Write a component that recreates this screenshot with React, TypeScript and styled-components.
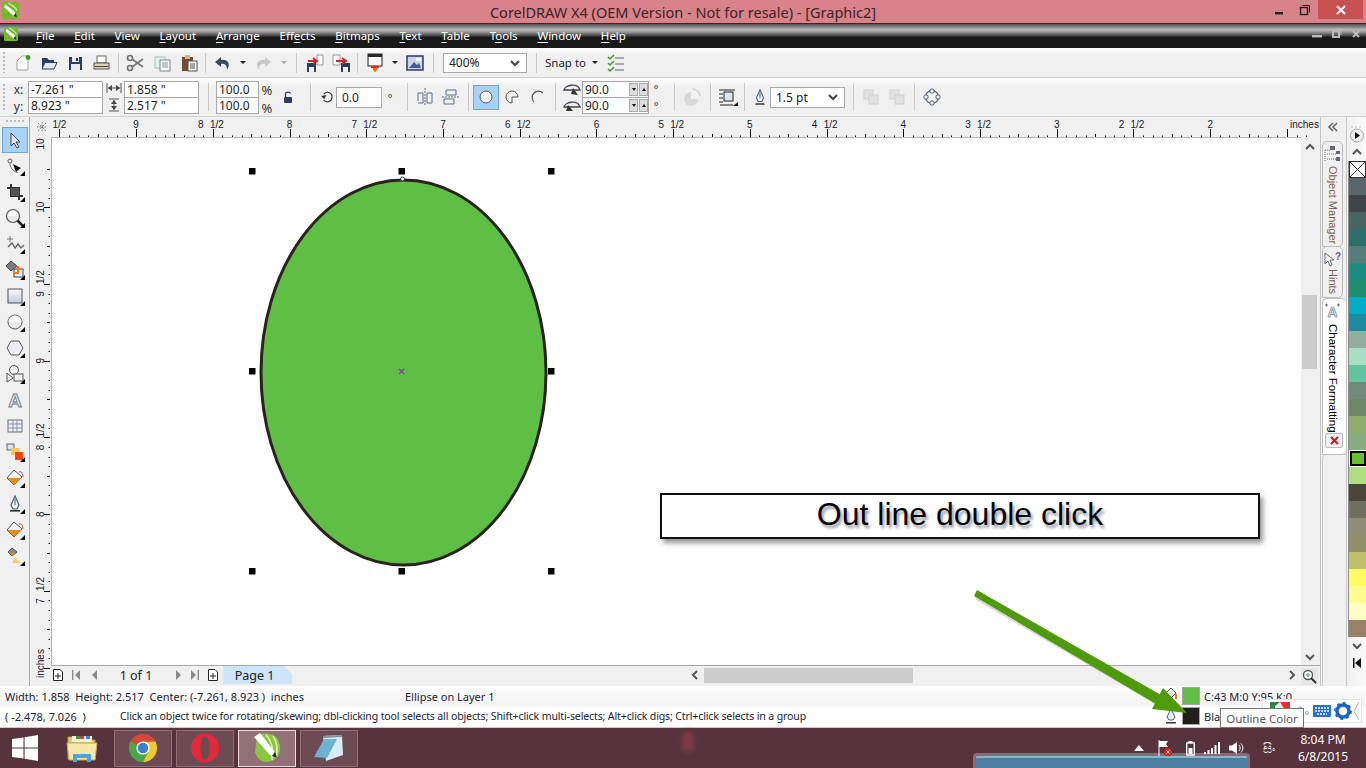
import React from 'react';
import styled, { createGlobalStyle } from 'styled-components';

const GlobalStyle = createGlobalStyle`
  html, body { margin: 0; padding: 0; background: #f0f0f0; }
  body { font-family: "Noto Sans", "Liberation Sans", sans-serif; }
`;

const Shell = styled.div`
  position: relative;
  width: 1366px;
  height: 768px;
  overflow: hidden;
  display: flex;
  flex-direction: column;
  background: #f0f0f0;
`;

/* ---------- title + menu ---------- */

const TitleBar = styled.div`
  height: 24px;
  flex: none;
  box-sizing: border-box;
  display: flex;
  align-items: center;
  justify-content: center;
  position: relative;
  background: #d8828a;
  border-bottom: 1px solid #3d2226;
  color: #3f2226;
  font-size: 14.5px;
`;

const TitleLogo = styled.div`
  position: absolute;
  left: 2px;
  top: 2px;
  line-height: 0;
`;

const WindowButtons = styled.div`
  position: absolute;
  right: 3px;
  top: 0;
  display: flex;
  align-items: flex-start;
`;

const WindowButton = styled.div<{ $w: number; $danger?: boolean }>`
  width: ${({ $w }) => $w}px;
  height: 19px;
  display: flex;
  align-items: center;
  justify-content: center;
  background: ${({ $danger }) => ($danger ? '#c75050' : 'transparent')};
`;

const MenuBar = styled.div`
  height: 24px;
  flex: none;
  display: flex;
  align-items: flex-end;
  position: relative;
  padding-left: 36px;
  gap: 19.8px;
  background: linear-gradient(#505050 0, #b8b8b8 24%, #8a8a8a 36%, #1a1a1a 56%, #1a1a1a 100%);
`;

const MenuLogo = styled.div`
  position: absolute;
  left: 4px;
  top: 3px;
  line-height: 0;
`;

const MenuItem = styled.span`
  color: #fff;
  font-size: 11.5px;
  line-height: 19px;
  height: 22px;
  u { text-underline-offset: 2px; }
`;

const MdiButtons = styled.div`
  position: absolute;
  right: 3px;
  top: 4px;
  display: flex;
  gap: 5px;
`;

/* ---------- toolbars ---------- */

const ToolRow = styled.div<{ $h: number }>`
  height: ${({ $h }) => $h}px;
  flex: none;
  box-sizing: border-box;
  display: flex;
  align-items: center;
  background: linear-gradient(#fff 0, #f0f0f0 22%);
  border-bottom: 1px solid #cfcfcf;
  position: relative;
`;

const Grip = styled.div`
  width: 2px;
  height: 70%;
  margin: 0 4px 0 3px;
  flex: none;
  background-image: linear-gradient(#b9b9b9 50%, transparent 50%);
  background-size: 2px 4px;
`;

const ToolSlot = styled.div<{ $w: number; $active?: boolean }>`
  width: ${({ $w }) => $w}px;
  height: 25px;
  flex: none;
  display: flex;
  align-items: center;
  justify-content: center;
  box-sizing: border-box;
  background: ${({ $active }) => ($active ? '#a9d2f6' : 'transparent')};
  border: 1px solid ${({ $active }) => ($active ? '#6aa7dc' : 'transparent')};
`;

const Caret = styled.div<{ $w?: number; $muted?: boolean }>`
  width: ${({ $w }) => $w ?? 14}px;
  flex: none;
  display: flex;
  justify-content: center;
  &::after {
    content: '';
    border-left: 3.5px solid transparent;
    border-right: 3.5px solid transparent;
    border-top: 3.5px solid ${({ $muted }) => ($muted ? '#aaa' : '#222')};
  }
`;

const Separator = styled.div<{ $l: number; $r: number; $h?: number }>`
  width: 1px;
  height: ${({ $h }) => $h ?? 20}px;
  flex: none;
  margin: 0 ${({ $r }) => $r}px 0 ${({ $l }) => $l}px;
  background: #c9c9c9;
`;

const ComboBox = styled.div<{ $w: number; $h: number }>`
  width: ${({ $w }) => $w}px;
  height: ${({ $h }) => $h}px;
  flex: none;
  box-sizing: border-box;
  border: 1px solid #a8a8a8;
  background: #fff;
  display: flex;
  align-items: center;
  justify-content: space-between;
  padding: 0 5px;
  font-size: 12px;
  color: #222;
`;

const SnapLabel = styled.span`
  width: 41px;
  flex: none;
  font-size: 11.5px;
  color: #222;
  white-space: nowrap;
`;

const FieldStack = styled.div<{ $w: number }>`
  width: ${({ $w }) => $w}px;
  flex: none;
  display: flex;
  flex-direction: column;
  margin-top: 1px;
`;

const Field = styled.div`
  height: 17px;
  box-sizing: border-box;
  border: 1px solid #a8a8a8;
  background: #fff;
  font-size: 12px;
  line-height: 15px;
  padding-left: 2px;
  color: #222;
  white-space: pre;
  display: flex;
  align-items: center;
  justify-content: space-between;
  & + & { margin-top: -1px; }
`;

const SideLabels = styled.div<{ $w: number; $size?: number }>`
  width: ${({ $w }) => $w}px;
  flex: none;
  height: 33px;
  display: flex;
  flex-direction: column;
  justify-content: space-around;
  align-items: center;
  font-size: ${({ $size }) => $size ?? 12}px;
  color: #333;
`;

const Spinner = styled.div`
  display: flex;
  gap: 1px;
  height: 13px;
`;

const SpinCell = styled.div<{ $up?: boolean }>`
  width: 9px;
  background: #dcdcdc;
  border: 1px solid #a9a9a9;
  box-sizing: border-box;
  display: flex;
  align-items: center;
  justify-content: center;
  &::after {
    content: '';
    border-left: 2.5px solid transparent;
    border-right: 2.5px solid transparent;
    ${({ $up }) => ($up ? 'border-bottom: 3px solid #111;' : 'border-top: 3px solid #111;')}
  }
`;

/* ---------- workspace ---------- */

const Workspace = styled.div`
  flex: 1;
  min-height: 0;
  display: flex;
  background: #f0f0f0;
`;

const Toolbox = styled.div`
  width: 29px;
  flex: none;
  border-right: 1px solid #ababab;
  display: flex;
  flex-direction: column;
  align-items: center;
  padding-top: 3px;
  box-sizing: content-box;
`;

const ToolboxGrip = styled.div`
  width: 18px;
  height: 2px;
  flex: none;
  margin-bottom: 5px;
  background-image: linear-gradient(90deg, #b9b9b9 50%, transparent 50%);
  background-size: 4px 2px;
`;

const ToolboxTool = styled.div<{ $active?: boolean }>`
  width: 26px;
  height: 26px;
  flex: none;
  box-sizing: border-box;
  position: relative;
  display: flex;
  align-items: center;
  justify-content: center;
  background: ${({ $active }) => ($active ? '#a9d2f6' : 'transparent')};
  border: 1px solid ${({ $active }) => ($active ? '#6aa7dc' : 'transparent')};
`;

const Flyout = styled.div`
  position: absolute;
  right: 2px;
  bottom: 2px;
  border-left: 5px solid transparent;
  border-bottom: 5px solid #000;
`;

const CenterColumn = styled.div`
  width: 1290px;
  flex: none;
  display: flex;
  flex-direction: column;
  border-right: 1px solid #c4c4c4;
  box-sizing: content-box;
`;

const RulerTop = styled.div`
  height: 20px;
  flex: none;
  line-height: 0;
`;

const BodyRow = styled.div`
  flex: 1;
  min-height: 0;
  display: flex;
`;

const RulerLeft = styled.div`
  width: 21px;
  flex: none;
  line-height: 0;
  height: 545px;
`;

const ViewColumn = styled.div`
  flex: 1;
  min-width: 0;
  display: flex;
  flex-direction: column;
`;

const CanvasRow = styled.div`
  height: 528px;
  flex: none;
  display: flex;
`;

const Canvas = styled.div`
  width: 1250px;
  flex: none;
  position: relative;
  background: #fff;
  border-top: 1px solid #b5b5b5;
  border-left: 1px solid #b5b5b5;
  box-sizing: border-box;
  overflow: hidden;
`;

const Drawing = styled.svg`
  position: absolute;
  left: 0;
  top: 0;
`;

const Callout = styled.div`
  position: absolute;
  left: 608px;
  top: 355px;
  width: 600px;
  height: 46px;
  box-sizing: border-box;
  border: 2px solid #111;
  padding-bottom: 3px;
  background: #fff;
  box-shadow: 3px 4px 5px rgba(60, 60, 60, 0.55);
  display: flex;
  align-items: center;
  justify-content: center;
  font-family: "Liberation Sans", Arial, sans-serif;
  font-size: 32px;
  color: #050505;
  text-shadow: 2px 3px 3px rgba(60, 70, 90, 0.55);
`;

const VScroll = styled.div`
  flex: 1;
  display: flex;
  flex-direction: column;
  align-items: center;
  justify-content: space-between;
  padding: 4px 2px 2px 0;
  position: relative;
  box-sizing: border-box;
`;

const VThumb = styled.div`
  position: absolute;
  left: 1px;
  top: 158px;
  width: 15px;
  height: 74px;
  background: #cdcdcd;
`;

const PageBar = styled.div`
  height: 19px;
  flex: none;
  display: flex;
  align-items: center;
  border-top: 1px solid #a9a9a9;
  box-sizing: border-box;
  font-size: 12px;
  color: #222;
`;

const PageCount = styled.span`
  width: 70px;
  flex: none;
  text-align: center;
  font-size: 12.5px;
`;

const PageTab = styled.div`
  width: 69px;
  height: 18px;
  flex: none;
  background: #cde4f9;
  display: flex;
  align-items: center;
  justify-content: center;
  padding-right: 6px;
  box-sizing: border-box;
  clip-path: polygon(0 0, 88% 0, 100% 45%, 100% 100%, 0 100%);
  font-size: 12.5px;
`;

const PageGap = styled.div`
  width: 410px;
  flex: none;
  display: flex;
  align-items: center;
  justify-content: flex-end;
  padding-right: 1px;
  box-sizing: border-box;
`;

const HTrack = styled.div`
  flex: 1;
  height: 15px;
  position: relative;
  display: flex;
  align-items: center;
  justify-content: flex-end;
  padding-right: 22px;
`;

const HThumb = styled.div`
  position: absolute;
  left: 2px;
  top: 0;
  width: 209px;
  height: 15px;
  background: #cdcdcd;
`;

const ZoomCorner = styled.div`
  position: absolute;
  right: 2px;
  top: 0;
  width: 17px;
  height: 17px;
  background: #e6e6e6;
  line-height: 0;
`;

const Docker = styled.div`
  width: 26px;
  flex: none;
  display: flex;
  flex-direction: column;
  align-items: flex-start;
  border-right: 1px solid #c9c9c9;
  padding-left: 1px;
  box-sizing: border-box;
`;

const DockerChevron = styled.div`
  width: 21px;
  height: 25px;
  flex: none;
  box-sizing: border-box;
  padding-bottom: 6px;
  display: flex;
  align-items: center;
  justify-content: center;
  line-height: 0;
`;

const DockerTab = styled.div<{ $h: number; $active?: boolean }>`
  width: ${({ $active }) => ($active ? 24 : 21)}px;
  height: ${({ $h }) => $h}px;
  flex: none;
  box-sizing: border-box;
  border: 1px solid #bdbdbd;
  border-right: ${({ $active }) => ($active ? 'none' : '1px solid #bdbdbd')};
  border-top-right-radius: 5px;
  border-top-left-radius: 5px;
  border-bottom-right-radius: 5px;
  background: ${({ $active }) => ($active ? '#fff' : '#f0f0f0')};
  display: flex;
  flex-direction: column;
  align-items: flex-start;
  padding: 3px 0 0 1px;
  position: relative;
  margin-top: ${({ $active }) => ($active ? '0' : '-1px')};
  svg { flex: none; }
`;

const DockerLabel = styled.span<{ $active?: boolean; $top: number }>`
  writing-mode: vertical-rl;
  width: 17px;
  flex: none;
  margin-top: ${({ $top }) => $top}px;
  font-family: "Liberation Sans", Arial, sans-serif;
  font-size: ${({ $active }) => ($active ? '11.5px' : '11px')};
  line-height: 17px;
  white-space: nowrap;
  color: ${({ $active }) => ($active ? '#000' : '#85604f')};
`;

const DockerClose = styled.div`
  position: absolute;
  left: 2px;
  bottom: 6px;
  width: 18px;
  height: 15px;
  box-sizing: border-box;
  border: 1px solid #bbb;
  border-radius: 2px;
  background: #efefef;
  display: flex;
  align-items: center;
  justify-content: center;
`;

const DockerRest = styled.div`
  flex: 1;
  width: 24px;
  margin-top: -1px;
  box-sizing: border-box;
  border: 1px solid #c9c9c9;
  border-bottom: none;
  border-right: none;
  border-top-left-radius: 5px;
`;

const PaletteColumn = styled.div`
  flex: 1;
  display: flex;
  flex-direction: column;
  align-items: center;
  background: linear-gradient(90deg, #f0f0f0, #fcfcfc);
`;

const PaletteGrip = styled.div`
  height: 10px;
  flex: none;
  padding-top: 5px;
  box-sizing: border-box;
  line-height: 0;
`;

const PaletteArrow = styled.div<{ $h: number }>`
  height: ${({ $h }) => $h}px;
  flex: none;
  display: flex;
  align-items: center;
  line-height: 0;
`;

const Swatches = styled.div`
  width: 18px;
  flex: none;
  border-left: 1px solid #8f8f8f;
  display: flex;
  flex-direction: column;
  margin-left: 1px;
`;

const Swatch = styled.div<{ $color: string; $selected?: boolean }>`
  height: 17px;
  box-sizing: border-box;
  background: ${({ $color }) => $color};
  border: ${({ $selected }) => ($selected ? '1px solid #fff' : 'none')};
  box-shadow: ${({ $selected }) => ($selected ? 'inset 0 0 0 2px #000' : 'none')};
  line-height: 0;
`;

/* ---------- status + taskbar ---------- */

const StatusBar = styled.div`
  height: 42px;
  flex: none;
  background: linear-gradient(#fff 0, #f3f3f3 45%, #fff 55%);
  border-bottom: 1px solid #c9c9c9;
  font-size: 11px;
  color: #1c2233;
  position: relative;
  box-sizing: border-box;
`;

const StatusRow = styled.div`
  height: 20px;
  display: flex;
  align-items: center;
  white-space: pre;
`;

const StatusCell = styled.span<{ $w: number; $l?: number; $hint?: boolean }>`
  width: ${({ $w }) => $w}px;
  margin-left: ${({ $l }) => $l ?? 0}px;
  flex: none;
  font-size: ${({ $hint }) => ($hint ? '10.6px' : '11px')};
  letter-spacing: ${({ $hint }) => ($hint ? '-0.15px' : '0')};
`;

const ColorPreview = styled.div<{ $color: string }>`
  width: 18px;
  height: 18px;
  flex: none;
  box-sizing: border-box;
  background: ${({ $color }) => $color};
  border: 1px solid #a5a5a5;
  margin: 0 4px 0 3px;
`;

const Taskbar = styled.div`
  height: 40px;
  flex: none;
  display: flex;
  align-items: center;
  background: #57343d;
  position: relative;
  color: #fff;
`;

const StartButton = styled.div`
  width: 50px;
  flex: none;
  display: flex;
  justify-content: center;
  line-height: 0;
`;

const PinnedIcon = styled.div`
  width: 64px;
  flex: none;
  display: flex;
  justify-content: center;
  line-height: 0;
`;

const TaskButton = styled.div<{ $active?: boolean }>`
  width: 58px;
  height: 37px;
  flex: none;
  box-sizing: border-box;
  margin-right: 4px;
  display: flex;
  align-items: center;
  justify-content: center;
  line-height: 0;
  background: ${({ $active }) => ($active ? '#917078' : '#6d4b54')};
  border: 1px solid ${({ $active }) => ($active ? '#e9dfe1' : '#8d7076')};
`;

const GhostMark = styled.div`
  position: absolute;
  left: 682px;
  top: 2px;
  width: 12px;
  height: 22px;
  border-radius: 50% 50% 40% 40%;
  background: #7e3a46;
  filter: blur(2px);
`;

const PeekThumb = styled.div`
  position: absolute;
  left: 973px;
  top: 25px;
  width: 277px;
  height: 20px;
  box-sizing: border-box;
  border: 3px solid #8b6a74;
  border-radius: 4px 4px 0 0;
  background: #4b7ea0;
  box-shadow: inset 0 2px 0 #8fb3cc;
`;

const Tray = styled.div`
  position: absolute;
  left: 1130px;
  top: 0;
  height: 40px;
  width: 236px;
  display: flex;
  align-items: center;
`;

const TrayIcon = styled.div<{ $w: number }>`
  width: ${({ $w }) => $w}px;
  flex: none;
  display: flex;
  justify-content: center;
  line-height: 0;
`;

const TrayLang = styled.div`
  width: 46px;
  flex: none;
  text-align: center;
  font-size: 13px;
`;

const Clock = styled.div`
  width: 70px;
  text-align: center;
  font-size: 12px;
  line-height: 17px;
  margin-left: -4px;
`;

/* ---------- overlays ---------- */

const ArrowOverlay = styled.svg`
  position: absolute;
  left: 0;
  top: 0;
  pointer-events: none;
`;

const ImeBar = styled.div`
  position: absolute;
  left: 1262px;
  top: 699px;
  width: 100px;
  height: 24px;
  padding-left: 3px;
  display: flex;
  align-items: center;
  background: #fff;
  border: 1px solid #e3e3e3;
  box-sizing: border-box;
  line-height: 0;
`;

const Tooltip = styled.div`
  position: absolute;
  left: 1220px;
  top: 708px;
  width: 84px;
  height: 20px;
  box-sizing: border-box;
  border: 1px solid #767676;
  background: #fff;
  font-size: 11.5px;
  color: #575757;
  display: flex;
  align-items: center;
  justify-content: center;
  white-space: nowrap;
`;

/* ---------- drawings ---------- */

const S: React.FC<{ size?: number; w?: number; h?: number; children: React.ReactNode }> = ({ size = 20, w, h, children }) => (
  <svg width={w ?? size} height={h ?? size} viewBox={`0 0 ${w ?? size} ${h ?? size}`}>{children}</svg>
);

const CorelLogo = ({ size = 16 }: { size?: number }) => (
  <svg width={size} height={size} viewBox="0 0 16 16">
    <rect width="16" height="16" rx="1.5" fill="#76b82a" />
    <path d="M3 2 L13 10 L11 13 L2 5 Z" fill="#fff" />
    <path d="M11 13 L14 14.5 L13 10 Z" fill="#333" />
    <path d="M6 1 C9 3 13 5 14 8" stroke="#cfe89f" strokeWidth="1.4" fill="none" />
  </svg>
);

const Navy = '#2f3b63';

const icons: Record<string, React.ReactNode> = {
  new: (<S><path d="M4 8 L9 3 H15 V17 H4 Z" fill="#fafafa" stroke="#a5a5a5" /><circle cx="15" cy="4.5" r="2.4" fill="#3f9a1e" /></S>),
  open: (<S><path d="M3 5 H8 L10 7 H15 V9 H6 L3 16 Z" fill={Navy} /><path d="M6 9.5 H18 L15 16 H3 Z" fill="#e5e7ef" stroke={Navy} /></S>),
  save: (<S><rect x="4" y="4" width="13" height="13" fill={Navy} /><rect x="7" y="4" width="7" height="5" fill="#e9e9ef" /><rect x="6" y="11" width="9" height="6" fill="#e9e9ef" /><rect x="11" y="5" width="2" height="3" fill={Navy} /></S>),
  print: (<S><rect x="6" y="3" width="9" height="7" fill="#fff" stroke="#666" /><rect x="3" y="10" width="15" height="6" fill="#d7d2b8" stroke="#555" /><line x1="4" y1="13.5" x2="17" y2="13.5" stroke="#444" /></S>),
  cut: (<S><circle cx="5" cy="5" r="2.5" fill="none" stroke="#6f6f6f" strokeWidth="1.6" /><circle cx="5" cy="15" r="2.5" fill="none" stroke="#6f6f6f" strokeWidth="1.6" /><path d="M7 6 L18 14 M7 14 L18 6" stroke="#7a7a7a" strokeWidth="1.8" /></S>),
  copy: (<S><rect x="3" y="4" width="10" height="11" fill="#e6f0ee" stroke="#a9c0bc" /><rect x="8" y="7" width="10" height="11" fill="#f7f7f7" stroke="#7c8a8c" /><path d="M10 10 H16 M10 12 H16 M10 14 H16" stroke="#8c9a9c" /></S>),
  paste: (<S><rect x="3" y="4" width="11" height="14" fill="#6f4d2e" /><rect x="6" y="2" width="5" height="4" fill="#cdb793" /><rect x="9" y="8" width="9" height="10" fill="#f7f7f7" stroke="#555" /><path d="M11 11 H16 M11 13 H16 M11 15 H16" stroke="#555" /></S>),
  undo: (<S><path d="M8 4 L2 9 L8 14 V11 C12 10 14 12 14 17 C18 11 15 6 8 7 Z" fill="#3e4a60" /></S>),
  redo: (<S><path d="M12 4 L18 9 L12 14 V11 C8 10 6 12 6 17 C2 11 5 6 12 7 Z" fill="#c9c9c9" /></S>),
  import: (<S><rect x="2" y="10" width="9" height="9" fill={Navy} /><rect x="4" y="14" width="5" height="5" fill="#eee" /><path d="M12 2 H18 V12 H12 Z" fill="#f7f7f7" stroke="#999" /><path d="M3 8 H11 M8 5 L12 8 L8 11" stroke="#d3202a" strokeWidth="2" fill="none" /></S>),
  export: (<S><rect x="10" y="10" width="9" height="9" fill={Navy} /><rect x="12" y="14" width="5" height="5" fill="#eee" /><path d="M2 2 H9 V12 H2 Z" fill="#f7f7f7" stroke="#999" /><path d="M5 8 H14 M11 5 L15 8 L11 11" stroke="#d3202a" strokeWidth="2" fill="none" /></S>),
  publish: (<S><rect x="3" y="1" width="14" height="12" fill="#f7f7f7" stroke="#222" /><rect x="3" y="1" width="14" height="3" fill="#2a2a2a" /><path d="M10 12 C14 14 12 18 10 19 C8 18 6 14 10 12" fill="#f26a1b" /><path d="M6 14 H14" stroke="#d92a1e" strokeWidth="2" /></S>),
  launcher: (<S><rect x="2" y="3" width="16" height="14" fill="#cfd3e6" stroke="#2f3b63" strokeWidth="1.5" /><path d="M4 15 L9 9 L12 12 L14 10 L16 15 Z" fill="#4a5a96" /><rect x="11" y="5" width="5" height="3" fill="#f7f7f7" /></S>),
  options: (<S><path d="M2 4 L4 6 L8 2 M2 10 L4 12 L8 8 M2 16 L4 18 L8 14" stroke="#3e9a22" strokeWidth="1.5" fill="none" /><path d="M9 5 H18 M9 11 H18 M9 17 H18" stroke="#5c6472" /></S>),
  lock: (<S><rect x="6" y="10" width="8" height="6" rx="1" fill={Navy} /><path d="M7.5 10 V7 C7.5 4.5 12 4.5 12.5 6.5" stroke={Navy} strokeWidth="1.3" fill="none" /></S>),
  rotate: (<S><path d="M5 6 C10 1 17 5 16 11 C15 17 8 18 5 14" stroke="#333" strokeWidth="1.5" fill="none" /><path d="M2 8 H9 L5 13 Z" transform="rotate(-10 5 10)" fill="#333" /></S>),
  mirrorA: (<S><path d="M10 1 V19" stroke="#666" strokeDasharray="2 1" /><path d="M3 14 V6 H8 V16 H3" fill="none" stroke="#5d6a8a" /><path d="M12 16 V6 H17 V16 Z" fill="none" stroke="#5d6a8a" /></S>),
  mirrorB: (<S><path d="M1 10 H19" stroke="#666" strokeDasharray="2 1" /><path d="M5 3 H15 V8 H5 Z" fill="none" stroke="#5d6a8a" /><path d="M3 12 H13 V17 H3 Z" fill="none" stroke="#5d6a8a" /></S>),
  circle: (<S><circle cx="10" cy="10" r="6" fill="#f2f2f2" stroke="#555" /></S>),
  pie: (<S><path d="M10 10 V16 A6 6 0 1 1 16 10 Z" fill="#f2f2f2" stroke="#555" /></S>),
  arc: (<S><path d="M6 15 A6 6 0 1 1 15 6" fill="none" stroke="#555" strokeWidth="1.2" /></S>),
  ang: (<S w={20} h={14}><path d="M2 9 C2 2 16 1 18 8 H2" fill="#eee" stroke="#445" strokeWidth="1.3" /><path d="M11 6 L16 13 L9 12 Z" fill="#333" /></S>),
  ang2: (<S w={20} h={14}><path d="M2 10 C2 3 16 2 18 9 H2" fill="#eee" stroke="#445" strokeWidth="1.3" /><path d="M6 7 L11 13 L4 13 Z" fill="#333" /></S>),
  pieGray: (<S><path d="M9 5 A7 7 0 1 0 16 12 H9 Z" fill="#d9d9d9" /><path d="M11 2 A8 8 0 0 1 18 9" stroke="#cfcfcf" strokeWidth="1.5" fill="none" /></S>),
  wrap: (<S><rect x="6" y="5" width="9" height="9" fill="#dfe5ee" stroke="#222" /><path d="M1 3 H17 M1 7 H5 M1 11 H5 M1 15 H5 M2 18 H15" stroke="#222" /><path d="M15 19 L20 19 L20 15 Z" fill="#111" /></S>),
  pen: (<S><path d="M10 2 L14 11 L12 15 H8 L6 11 Z" fill="#eef1f3" stroke="#4a5a72" strokeWidth="1.2" /><path d="M10 5 V11" stroke="#4a5a72" /><rect x="5" y="17" width="10" height="1.6" fill="#333" /></S>),
  combineA: (<S><rect x="3" y="3" width="9" height="9" fill="#e2e2e2" stroke="#cfcfcf" /><rect x="8" y="8" width="9" height="9" fill="#e2e2e2" stroke="#cfcfcf" /></S>),
  convert: (<S><circle cx="10" cy="10" r="6.5" fill="none" stroke="#5b6470" strokeWidth="1.3" /><g fill="#eef0f3" stroke="#4a5566"><rect x="8" y="2" width="4" height="4" rx="1.5" /><rect x="8" y="14" width="4" height="4" rx="1.5" /><rect x="2" y="8" width="4" height="4" rx="1.5" /><rect x="14" y="8" width="4" height="4" rx="1.5" /></g></S>),
};

const toolIcons: React.ReactNode[] = [
  (<S><path d="M6 3 V16 L9 13 L12 18 L14 17 L11 12 H15 Z" fill="#dbe6f2" stroke="#39465c" /></S>),
  (<S><circle cx="5" cy="5" r="2" fill="#fff" stroke="#555" /><path d="M5 7 C5 12 8 15 13 17" stroke="#777" fill="none" /><path d="M8 8 L16 12 L11 16 Z" fill="#111" /></S>),
  (<S><path d="M6 2 V14 H18 M2 6 H14 V18" stroke="#333" strokeWidth="2" fill="none" /><path d="M6 14 L14 6" stroke="#555" /><rect x="6" y="6" width="8" height="8" fill="#555" /></S>),
  (<S><circle cx="8" cy="8" r="6.5" fill="#e9eaeb" stroke="#555" strokeWidth="1.2" /><path d="M3 8 A5 5 0 0 1 13 8 Z" fill="#fafafa" /><path d="M12.5 12.5 L18 18" stroke="#222" strokeWidth="2.5" /></S>),
  (<S><path d="M5 2 V8 M2 5 H8" stroke="#777" /><path d="M3 13 L7 9 L10 14 L13 10 L16 14 L19 11" stroke="#666" strokeWidth="1.4" fill="none" /></S>),
  (<S><rect x="9" y="9" width="9" height="8" fill="#e9ecf2" stroke="#3a4660" /><path d="M6 1 L12 6 L6 11 L1 6 Z" fill="#7d7d7d" stroke="#444" /><path d="M11 7 H13 V13 H8" stroke="#f07a17" strokeWidth="2" fill="none" /></S>),
  (<S><defs><linearGradient id="rectFill" x1="0" y1="0" x2="0" y2="1"><stop offset="0" stopColor="#fbfbfb" /><stop offset="1" stopColor="#c3c9d8" /></linearGradient></defs><rect x="3" y="3" width="14" height="14" fill="url(#rectFill)" stroke="#555" /></S>),
  (<S><circle cx="10" cy="10" r="7" fill="#e9e9ee" stroke="#555" /><path d="M3.5 10 A6.5 6.5 0 0 1 16.5 10 Z" fill="#fafafa" /></S>),
  (<S><path d="M6 3 H14 L18 10 L14 17 H6 L2 10 Z" fill="#eceef2" stroke="#555" /></S>),
  (<S><circle cx="9" cy="6" r="4.5" fill="#eef0f4" stroke="#555" /><rect x="9" y="10" width="9" height="7" fill="#eef0f4" stroke="#555" /><path d="M2 9 L8 14 L2 18 Z" fill="#eef0f4" stroke="#555" /></S>),
  (<S><text x="10" y="17" textAnchor="middle" fontFamily="Liberation Sans, sans-serif" fontWeight="700" fontSize="19" fill="#dfe3e8" stroke="#6d7683" strokeWidth="0.8">A</text></S>),
  (<S><rect x="3" y="4" width="14" height="12" fill="#eef0f6" stroke="#6a6f7c" /><path d="M3 8 H17 M3 12 H17 M8 4 V16 M12 4 V16" stroke="#8a8f9c" /></S>),
  (<S><rect x="2" y="2" width="7" height="6" fill="#dfe2e8" stroke="#666" /><rect x="6" y="6" width="8" height="7" fill="#f7c65c" /><rect x="10" y="10" width="8" height="8" fill="#e64b10" /></S>),
  (<S><path d="M9 2 L17 9 L9 17 L2 10 Z" fill="#f7f7f7" stroke="#555" /><path d="M2.5 10 H16.5 L9 17 Z" fill="#ee8a1d" /><path d="M14 4 C17 3 18 6 18 9" stroke="#a0582a" fill="none" /></S>),
  (<S><path d="M10 2 L14 11 L12 15 H8 L6 11 Z" fill="#eef1f3" stroke="#4a5a72" strokeWidth="1.2" /><path d="M10 5 V11" stroke="#4a5a72" /><rect x="5" y="16" width="10" height="1.6" fill="#333" /></S>),
  (<S><path d="M9 2 L17 9 L9 17 L2 10 Z" fill="#f7f7f7" stroke="#555" /><path d="M2.5 10 H16.5 L9 17 Z" fill="#ee8a1d" /><path d="M14 4 C17 3 18 6 18 9" stroke="#a0582a" fill="none" /></S>),
  (<S><path d="M7 2 L12 6 L7 10 L3 6 Z" fill="#8a8a8a" stroke="#555" /><path d="M5 7 H10 L7 10 Z" fill="#ee8a1d" /><path d="M10 11 L16 17 H7 Z" fill="#f2cc7a" /></S>),
];

const Chevron = ({ up, down, left, right, color = '#555' }: { up?: boolean; down?: boolean; left?: boolean; right?: boolean; color?: string }) => {
  const d = up ? 'M2 8 L6 4 L10 8' : down ? 'M2 4 L6 8 L10 4' : left ? 'M8 2 L4 6 L8 10' : right ? 'M4 2 L8 6 L4 10' : '';
  return (
    <svg width="12" height="12" viewBox="0 0 12 12">
      <path d={d} fill="none" stroke={color} strokeWidth="2" />
    </svg>
  );
};

const NavGlyph = ({ kind }: { kind: 'first' | 'prev' | 'next' | 'last' | 'add' }) => (
  <svg width="12" height="14" viewBox="0 0 12 14">
    {kind === 'add' && (<g><path d="M1.5 1.5 H8 L10.5 4 V12.5 H1.5 Z" fill="#fff" stroke="#222" /><path d="M6 5 V11 M3 8 H9" stroke="#222" /></g>)}
    {kind === 'first' && (<g fill="#8a8a8a"><rect x="2" y="2" width="1.4" height="10" /><path d="M10 2 L5 7 L10 12 Z" /></g>)}
    {kind === 'prev' && <path d="M9 2 L4 7 L9 12 Z" fill="#8a8a8a" />}
    {kind === 'next' && <path d="M3 2 L8 7 L3 12 Z" fill="#8a8a8a" />}
    {kind === 'last' && (<g fill="#8a8a8a"><rect x="8.6" y="2" width="1.4" height="10" /><path d="M2 2 L7 7 L2 12 Z" /></g>)}
  </svg>
);

const PX = 76.72;

const HorizontalRuler = () => {
  const marks: React.ReactNode[] = [];
  const originX = 59.4 - 30;
  for (let i = 0; i < 150; i++) {
    const x = originX + (i * PX) / 8;
    if (x > 1283) break;
    const major = i % 8 === 0;
    const quarter = i % 4 === 0;
    const h = major ? 8 : quarter ? 3 : 1.5;
    marks.push(<line key={i} x1={Math.round(x) + 0.5} x2={Math.round(x) + 0.5} y1={20 - h} y2={20} stroke="#111" />);
  }
  const digits = ['9', '8', '7', '6', '5', '4', '3', '2'];
  const labels: React.ReactNode[] = [];
  labels.push(<text key="h0" x={originX} y={11} textAnchor="middle">1/2</text>);
  digits.forEach((d, n) => {
    const whole = originX + PX * (2 * n + 1);
    labels.push(<text key={`w${d}`} x={whole} y={11} textAnchor="middle">{d}</text>);
    if (d !== '2') {
      const half = whole + PX;
      labels.push(<text key={`d${d}`} x={half - 12} y={11} textAnchor="middle">{Number(d) - 1}</text>);
      labels.push(<text key={`h${d}`} x={half + 4} y={11} textAnchor="middle">1/2</text>);
    }
  });
  return (
    <svg width="1290" height="20" viewBox="0 0 1290 20" fontFamily="Liberation Sans, sans-serif" fontSize="10" fill="#1a1a2a">
      <path d="M8 6 L16 14 M16 6 L8 14 M12 5 V15 M7 10 H17" stroke="#555" strokeWidth="0.8" strokeDasharray="1.5 1" />
      {marks}
      {labels}
      <text x="1260" y="11">inches</text>
    </svg>
  );
};

const VerticalRuler = () => {
  const originY = 207.3 - 137;
  const marks: React.ReactNode[] = [];
  for (let i = -4; i < 80; i++) {
    const y = originY + (i * PX) / 8;
    if (y > 540) break;
    const major = i % 8 === 0;
    const quarter = i % 4 === 0;
    const w = major ? 6 : quarter ? 3 : 1.5;
    marks.push(<line key={i} y1={Math.round(y) + 0.5} y2={Math.round(y) + 0.5} x1={20 - w} x2={20} stroke="#111" />);
  }
  const rot = (y: number, t: string, anchor: 'start' | 'middle' = 'start') => (
    <text key={`${t}${y}`} transform={`translate(14 ${y}) rotate(-90)`} textAnchor={anchor}>{t}</text>
  );
  const labels = [
    rot(7, '10', 'middle'),
    rot(originY, '10', 'middle'),
    rot(originY + PX, '1/2'),
    rot(originY + PX + 10, '9', 'middle'),
    rot(originY + PX * 2, '9', 'middle'),
    rot(originY + PX * 3, '1/2'),
    rot(originY + PX * 3 + 10, '8', 'middle'),
    rot(originY + PX * 4, '8', 'middle'),
    rot(originY + PX * 5, '1/2'),
    rot(originY + PX * 5 + 10, '7', 'middle'),
    rot(541, 'inches'),
  ];
  return (
    <svg width="21" height="545" viewBox="0 0 21 545" fontFamily="Liberation Sans, sans-serif" fontSize="10" fill="#1a1a2a">
      {marks}
      {labels}
    </svg>
  );
};

const WinLogo = () => (
  <svg width="26" height="26" viewBox="0 0 26 26" fill="#fff">
    <path d="M0 4 L11.5 2.4 V12.4 H0 Z M12.6 2.2 L26 0 V12.4 H12.6 Z M0 13.6 H11.5 V23.6 L0 22 Z M12.6 13.6 H26 V26 L12.6 23.8 Z" />
  </svg>
);

const FolderIcon = () => (
  <svg width="32" height="30" viewBox="0 0 32 30">
    <path d="M2 4 H12 L15 7 H29 V26 H2 Z" fill="#e9c86b" stroke="#b9964b" />
    <rect x="6" y="3" width="20" height="6" fill="#f7f2dc" />
    <rect x="10" y="3" width="4" height="3" fill="#3a9a3a" />
    <rect x="14" y="3" width="4" height="3" fill="#c8423a" />
    <rect x="20" y="3" width="4" height="3" fill="#3a8ac8" />
    <path d="M1 10 H31 L29 27 H3 Z" fill="#f7e7a9" stroke="#c7a659" />
    <path d="M7 29 V21 H25 V29 H21 V25 H11 V29 Z" fill="#4aa5e0" />
  </svg>
);

const ChromeIcon = () => (
  <svg width="30" height="30" viewBox="0 0 30 30">
    <circle cx="15" cy="15" r="14" fill="#4aa84a" />
    <path d="M15 8.5 H27.4 A14 14 0 0 1 15 29 L20.5 19 Z" fill="#f5c92e" />
    <path d="M3 8 A14 14 0 0 1 27.4 8.5 L15 8.5 A6.5 6.5 0 0 0 9 12.5 Z" fill="#dc4437" />
    <circle cx="15" cy="15" r="6.6" fill="#fff" />
    <circle cx="15" cy="15" r="5.2" fill="#3f7fd0" />
  </svg>
);

const OperaIcon = () => (
  <svg width="28" height="30" viewBox="0 0 28 30">
    <path fillRule="evenodd" d="M14 0.5 C22 0.5 28 7 28 15 C28 23 22 29.5 14 29.5 C6 29.5 0 23 0 15 C0 7 6 0.5 14 0.5 Z M14 3.5 C10.5 3.5 9.5 9 9.5 15 C9.5 21 10.5 26.5 14 26.5 C17.5 26.5 18.5 21 18.5 15 C18.5 9 17.5 3.5 14 3.5 Z" fill="#e22a36" />
  </svg>
);

const CorelTaskIcon = () => (
  <svg width="30" height="32" viewBox="0 0 30 32">
    <path d="M5 3 C14 -1 27 2 28 14 C29 24 22 30 14 30 C9 30 5 26 3 20 Z" fill="#8cc63f" />
    <path d="M14 3 C19 8 22 16 20 28 M21 4 C25 10 26 18 24 26" stroke="#dfeeb4" strokeWidth="1.6" fill="none" />
    <path d="M2 5 L8 1 L22 19 L25 26 L18 23 Z" fill="#fff" />
    <path d="M20 24 L25 26 L23 20 Z" fill="#222" />
  </svg>
);

const NotepadIcon = () => (
  <svg width="32" height="30" viewBox="0 0 32 30">
    <path d="M10 3 L29 2 L30 22 L13 28 Z" fill="#d9ecf5" />
    <path d="M10 3 L29 2 V4 L10 5 Z" fill="#8a8f99" />
    <path d="M11 6 L24 6 L14 25 L1 24 Z" fill="#6fb1d0" />
  </svg>
);

const Arrow = () => (
  <ArrowOverlay width="1366" height="768" viewBox="0 0 1366 768">
    <path d="M976 594 L1160 701" stroke="#9a9a9a" strokeWidth="6" opacity="0.4" transform="translate(1 3)" />
    <path d="M977 590 L974 596 L1156 704 L1161 695 Z" fill="#4f9a0b" />
    <path d="M1163 688 L1187 713 L1152 709 Z" fill="#4f9a0b" />
  </ArrowOverlay>
);

const paletteColors = [
  '#59666a', '#3f4649', '#4a6462', '#2a6f6c', '#577d7a', '#1c8d83', '#1f8e6f', '#00acc6', '#1f8ba0',
  '#93ae9f', '#a9dcc4', '#63c3a0', '#728a7b', '#6f8769', '#8fae6c', '#89ab80',
];
const paletteColorsAfter = [
  '#afdf7f', '#4a4639', '#6f6f5f', '#8f8f79', '#8f9069', '#c0bf6a', '#fffb63', '#fffb8f', '#ffffc5', '#9a8166',
];

const menus: [string, string, string][] = [
  ['', 'F', 'ile'], ['', 'E', 'dit'], ['', 'V', 'iew'], ['', 'L', 'ayout'], ['', 'A', 'rrange'],
  ['Eff', 'e', 'cts'], ['', 'B', 'itmaps'], ['', 'T', 'ext'], ['', 'T', 'able'], ['T', 'o', 'ols'],
  ['', 'W', 'indow'], ['', 'H', 'elp'],
];

const App: React.FC = () => (
  <Shell>
    <GlobalStyle />
    <TitleBar>
      <TitleLogo><CorelLogo size={17} /></TitleLogo>
      CorelDRAW X4 (OEM Version - Not for resale) - [Graphic2]
      <WindowButtons>
        <WindowButton $w={26}>
          <svg width="10" height="10" viewBox="0 0 10 10"><rect x="1" y="7" width="8" height="2.4" fill="#222" /></svg>
        </WindowButton>
        <WindowButton $w={26}>
          <svg width="12" height="12" viewBox="0 0 12 12"><rect x="1.5" y="3.5" width="7" height="7" fill="none" stroke="#222" strokeWidth="1.4" /><path d="M3.5 1.5 H10.5 V8.5" fill="none" stroke="#222" /></svg>
        </WindowButton>
        <WindowButton $w={45} $danger>
          <svg width="10" height="10" viewBox="0 0 10 10"><path d="M1 1 L9 9 M9 1 L1 9" stroke="#fff" strokeWidth="2" /></svg>
        </WindowButton>
      </WindowButtons>
    </TitleBar>

    <MenuBar>
      <MenuLogo><CorelLogo size={14} /></MenuLogo>
      {menus.map(([a, b, c]) => (
        <MenuItem key={a + b + c}>{a}<u>{b}</u>{c}</MenuItem>
      ))}
      <MdiButtons>
        <svg width="14" height="12" viewBox="0 0 14 12"><rect x="1" y="7" width="10" height="2.4" fill="#bbb" /></svg>
        <svg width="14" height="12" viewBox="0 0 14 12"><rect x="3" y="3" width="6" height="6" fill="none" stroke="#bbb" strokeWidth="2" /><path d="M5 1 H11 V7" fill="none" stroke="#bbb" /></svg>
        <svg width="14" height="12" viewBox="0 0 14 12"><path d="M4 3 L10 9 M10 3 L4 9" stroke="#bbb" strokeWidth="2" /></svg>
      </MdiButtons>
    </MenuBar>

    <ToolRow $h={30}>
      <Grip />
      <ToolSlot $w={27}>{icons.new}</ToolSlot>
      <ToolSlot $w={26}>{icons.open}</ToolSlot>
      <ToolSlot $w={26}>{icons.save}</ToolSlot>
      <ToolSlot $w={26}>{icons.print}</ToolSlot>
      <Separator $l={4} $r={3} />
      <ToolSlot $w={26}>{icons.cut}</ToolSlot>
      <ToolSlot $w={28}>{icons.copy}</ToolSlot>
      <ToolSlot $w={25}>{icons.paste}</ToolSlot>
      <Separator $l={4} $r={4} />
      <ToolSlot $w={26}>{icons.undo}</ToolSlot>
      <Caret $w={14} />
      <ToolSlot $w={26}>{icons.redo}</ToolSlot>
      <Caret $w={16} $muted />
      <Separator $l={4} $r={5} />
      <ToolSlot $w={26}>{icons.import}</ToolSlot>
      <ToolSlot $w={26}>{icons.export}</ToolSlot>
      <Separator $l={3} $r={5} />
      <ToolSlot $w={24}>{icons.publish}</ToolSlot>
      <Caret $w={16} />
      <ToolSlot $w={24}>{icons.launcher}</ToolSlot>
      <Separator $l={6} $r={9} />
      <ComboBox $w={84} $h={20}>
        400%
        <Chevron down color="#444" />
      </ComboBox>
      <Separator $l={9} $r={8} />
      <SnapLabel>Snap to</SnapLabel>
      <Caret $w={18} />
      <ToolSlot $w={24}>{icons.options}</ToolSlot>
    </ToolRow>

    <ToolRow $h={39}>
      <Grip />
      <SideLabels $w={19}><span>x:</span><span>y:</span></SideLabels>
      <FieldStack $w={75}>
        <Field>-7.261 "</Field>
        <Field>8.923 "</Field>
      </FieldStack>
      <SideLabels $w={21}>
        <S w={16} h={12}><path d="M1 1 V11 M15 1 V11 M2 6 H14" stroke="#555" /><path d="M2 6 L6 3 V9 Z M14 6 L10 3 V9 Z" fill="#444" /></S>
        <S w={12} h={14}><path d="M1 1 H11 M1 13 H11 M6 2 V12" stroke="#555" /><path d="M6 2 L3 6 H9 Z M6 12 L3 8 H9 Z" fill="#444" /></S>
      </SideLabels>
      <FieldStack $w={75}>
        <Field>1.858 "</Field>
        <Field>2.517 "</Field>
      </FieldStack>
      <Separator $l={9} $r={7} $h={28} />
      <FieldStack $w={43}>
        <Field>100.0</Field>
        <Field>100.0</Field>
      </FieldStack>
      <SideLabels $w={16} $size={13}><span>%</span><span>%</span></SideLabels>
      <ToolSlot $w={26}>{icons.lock}</ToolSlot>
      <Separator $l={9} $r={8} $h={28} />
      <ToolSlot $w={17}>{icons.rotate}</ToolSlot>
      <ComboBox $w={46} $h={21}>0.0</ComboBox>
      <SideLabels $w={16} $size={11}><span>°</span></SideLabels>
      <Separator $l={9} $r={4} $h={28} />
      <ToolSlot $w={25}>{icons.mirrorA}</ToolSlot>
      <ToolSlot $w={28}>{icons.mirrorB}</ToolSlot>
      <Separator $l={3} $r={4} $h={28} />
      <ToolSlot $w={26} $active>{icons.circle}</ToolSlot>
      <ToolSlot $w={26}>{icons.pie}</ToolSlot>
      <ToolSlot $w={26}>{icons.arc}</ToolSlot>
      <Separator $l={4} $r={6} $h={28} />
      <SideLabels $w={20}>{icons.ang}{icons.ang2}</SideLabels>
      <FieldStack $w={67}>
        <Field>90.0<Spinner><SpinCell /><SpinCell $up /></Spinner></Field>
        <Field>90.0<Spinner><SpinCell /><SpinCell $up /></Spinner></Field>
      </FieldStack>
      <SideLabels $w={14} $size={11}><span>°</span><span>°</span></SideLabels>
      <Separator $l={11} $r={5} $h={28} />
      <ToolSlot $w={24}>{icons.pieGray}</ToolSlot>
      <Separator $l={6} $r={4} $h={28} />
      <ToolSlot $w={26}>{icons.wrap}</ToolSlot>
      <Separator $l={3} $r={5} $h={28} />
      <ToolSlot $w={20}>{icons.pen}</ToolSlot>
      <ComboBox $w={75} $h={21}>
        1.5 pt
        <Chevron down color="#444" />
      </ComboBox>
      <Separator $l={8} $r={5} $h={28} />
      <ToolSlot $w={24}>{icons.combineA}</ToolSlot>
      <ToolSlot $w={28}>{icons.combineA}</ToolSlot>
      <Separator $l={3} $r={5} $h={28} />
      <ToolSlot $w={24}>{icons.convert}</ToolSlot>
    </ToolRow>

    <Workspace>
      <Toolbox>
        <ToolboxGrip />
        {toolIcons.map((ic, i) => (
          <ToolboxTool key={i} $active={i === 0}>
            {ic}
            {i !== 0 && i !== 10 && i !== 11 && <Flyout />}
          </ToolboxTool>
        ))}
      </Toolbox>

      <CenterColumn>
        <RulerTop><HorizontalRuler /></RulerTop>
        <BodyRow>
          <RulerLeft><VerticalRuler /></RulerLeft>
          <ViewColumn>
            <CanvasRow>
              <Canvas>
                <Drawing width="1250" height="528" viewBox="52 138 1250 528">
                  <ellipse cx="403.5" cy="372.5" rx="142.5" ry="192.5" fill="#5fbf45" stroke="#2b2220" strokeWidth="3" />
                  <circle cx="402.5" cy="179" r="2" fill="#fff" stroke="#333" />
                  {[252, 401.5, 551].map((x) =>
                    [171, 371, 571].map((y) =>
                      x === 401.5 && y === 371 ? null : (
                        <rect key={`${x}-${y}`} x={x - 3} y={y - 3} width="6.5" height="6.5" fill="#000" />
                      ),
                    ),
                  )}
                  <path d="M399 369 L404 374 M404 369 L399 374" stroke="#8a3aa0" strokeWidth="1.4" />
                </Drawing>
                <Callout>Out line double click</Callout>
              </Canvas>
              <VScroll>
                <VThumb />
                <Chevron up />
                <Chevron down />
              </VScroll>
            </CanvasRow>
            <PageBar>
              <ToolSlot $w={14}><NavGlyph kind="add" /></ToolSlot>
              <ToolSlot $w={22}><NavGlyph kind="first" /></ToolSlot>
              <ToolSlot $w={14}><NavGlyph kind="prev" /></ToolSlot>
              <PageCount>1 of 1</PageCount>
              <ToolSlot $w={16}><NavGlyph kind="next" /></ToolSlot>
              <ToolSlot $w={16}><NavGlyph kind="last" /></ToolSlot>
              <ToolSlot $w={20}><NavGlyph kind="add" /></ToolSlot>
              <PageTab>Page 1</PageTab>
              <PageGap><Chevron left color="#555" /></PageGap>
              <HTrack>
                <HThumb />
                <Chevron right />
                <ZoomCorner>
                  <svg width="17" height="17" viewBox="0 0 17 17"><circle cx="7" cy="7" r="4.5" fill="#fff" stroke="#555" strokeWidth="1.4" /><circle cx="7" cy="7" r="2" fill="#9aa" /><path d="M10 10 L15 15" stroke="#333" strokeWidth="2" /></svg>
                </ZoomCorner>
              </HTrack>
            </PageBar>
          </ViewColumn>
        </BodyRow>
      </CenterColumn>

      <Docker>
        <DockerChevron>
          <svg width="12" height="12" viewBox="0 0 12 12"><path d="M6 2 L2 6 L6 10 M10 2 L6 6 L10 10" fill="none" stroke="#666" strokeWidth="1.6" /></svg>
        </DockerChevron>
        <DockerTab $h={106}>
          <svg width="17" height="17" viewBox="0 0 17 17"><rect x="6" y="1" width="5" height="4" fill="#667" /><rect x="12" y="6" width="4" height="3" fill="#667" /><rect x="12" y="12" width="4" height="4" fill="#667" /><path d="M1 5 V16 M1 5 H6 M3 9 H12 M3 14 H12" stroke="#667" strokeDasharray="1 1" fill="none" /></svg>
          <DockerLabel $top={4}>Object Manager</DockerLabel>
        </DockerTab>
        <DockerTab $h={52}>
          <svg width="17" height="17" viewBox="0 0 17 17"><path d="M1 3 V14 L4 11 L6 16 L8 15 L6 10 H10 Z" fill="#fff" stroke="#667" /><text x="11" y="10" fontFamily="Liberation Sans, sans-serif" fontWeight="700" fontSize="10" fill="#667">?</text></svg>
          <DockerLabel $top={2}>Hints</DockerLabel>
        </DockerTab>
        <DockerTab $h={157} $active>
          <svg width="17" height="17" viewBox="0 0 17 17"><text x="8.5" y="15" textAnchor="middle" fontFamily="Liberation Sans, sans-serif" fontWeight="700" fontSize="14" fill="#dfe3e8" stroke="#6d7683" strokeWidth="0.6">A</text><path d="M1 3 H4 M2.5 1.5 V4.5 M13 3 H16 M14.5 1.5 V4.5" stroke="#555" strokeWidth="0.8" /></svg>
          <DockerLabel $active $top={5}>Character Formatting</DockerLabel>
          <DockerClose>
            <svg width="9" height="9" viewBox="0 0 9 9"><path d="M1 1 L8 8 M8 1 L1 8" stroke="#b3272d" strokeWidth="2.2" /></svg>
          </DockerClose>
        </DockerTab>
        <DockerRest />
      </Docker>

      <PaletteColumn>
        <PaletteGrip>
          <svg width="12" height="2" viewBox="0 0 12 2"><path d="M0 1 H12" stroke="#bbb" strokeDasharray="2 2" /></svg>
        </PaletteGrip>
        <PaletteArrow $h={16}>
          <svg width="16" height="15" viewBox="0 0 16 15"><circle cx="8" cy="7.5" r="6.5" fill="#eee" stroke="#aaa" /><path d="M6 4 L11 7.5 L6 11 Z" fill="#111" /></svg>
        </PaletteArrow>
        <PaletteArrow $h={18}><Chevron up /></PaletteArrow>
        <Swatches>
          <Swatch $color="#fff">
            <svg width="17" height="17" viewBox="0 0 17 17"><path d="M0 0 L17 17 M17 0 L0 17" stroke="#333" /><rect x="0.5" y="0.5" width="16" height="16" fill="none" stroke="#333" /></svg>
          </Swatch>
          {paletteColors.map((c) => <Swatch key={c} $color={c} />)}
          <Swatch $color="#67c12f" $selected />
          {paletteColorsAfter.map((c) => <Swatch key={c} $color={c} />)}
        </Swatches>
        <PaletteArrow $h={18}><Chevron down /></PaletteArrow>
        <PaletteArrow $h={16}>
          <svg width="10" height="12" viewBox="0 0 10 12"><rect x="1" y="1" width="1.5" height="10" fill="#111" /><path d="M9 1 L3 6 L9 11 Z" fill="#111" /></svg>
        </PaletteArrow>
      </PaletteColumn>
    </Workspace>

    <StatusBar>
      <StatusRow>
        <StatusCell $w={400} $l={5}>Width: 1.858  Height: 2.517  Center: (-7.261, 8.923 )  inches</StatusCell>
        <StatusCell $w={758}>Ellipse on Layer 1</StatusCell>
        <svg width="16" height="18" viewBox="0 0 16 18"><path d="M8 1 L13 6 L8 11 L3 6 Z" fill="#eee" stroke="#555" /><path d="M13 7 V12" stroke="#f07a17" strokeWidth="2" /></svg>
        <ColorPreview $color="#5fbf45" />
        <span>C:43 M:0 Y:95 K:0</span>
      </StatusRow>
      <StatusRow>
        <StatusCell $w={110} $l={5}>( -2.478, 7.026  )</StatusCell>
        <StatusCell $w={1043} $l={5} $hint>Click an object twice for rotating/skewing; dbl-clicking tool selects all objects; Shift+click multi-selects; Alt+click digs; Ctrl+click selects in a group</StatusCell>
        <svg width="16" height="18" viewBox="0 0 16 18"><path d="M8 2 L12 10 L10 13 H6 L4 10 Z" fill="#eef1f3" stroke="#4a5a72" /><rect x="3" y="15" width="10" height="1.5" fill="#333" /></svg>
        <ColorPreview $color="#221f1a" />
        <span>Black</span>
      </StatusRow>
    </StatusBar>

    <Taskbar>
      <StartButton><WinLogo /></StartButton>
      <PinnedIcon><FolderIcon /></PinnedIcon>
      <TaskButton><ChromeIcon /></TaskButton>
      <TaskButton><OperaIcon /></TaskButton>
      <TaskButton $active><CorelTaskIcon /></TaskButton>
      <TaskButton><NotepadIcon /></TaskButton>
      <GhostMark />
      <PeekThumb />
      <Tray>
        <TrayIcon $w={18}><svg width="10" height="6" viewBox="0 0 10 6"><path d="M5 0 L10 6 H0 Z" fill="#fff" /></svg></TrayIcon>
        <TrayIcon $w={34}>
          <svg width="16" height="18" viewBox="0 0 16 18"><path d="M2 1 V17" stroke="#fff" /><path d="M2 2 H11 L9 5 L11 8 H2 Z" fill="#fff" /><circle cx="11" cy="13" r="4" fill="#dd2020" /><path d="M9.5 11.5 L12.5 14.5 M12.5 11.5 L9.5 14.5" stroke="#fff" /></svg>
        </TrayIcon>
        <TrayIcon $w={16}>
          <svg width="9" height="15" viewBox="0 0 9 15"><rect x="2.5" y="0" width="4" height="2" fill="#fff" /><rect x="0.7" y="2" width="7.6" height="12" fill="none" stroke="#fff" strokeWidth="1.4" /><rect x="2.5" y="7" width="4" height="6" fill="#fff" /></svg>
        </TrayIcon>
        <TrayIcon $w={28}>
          <svg width="16" height="12" viewBox="0 0 16 12" fill="#fff"><rect x="0" y="10" width="2" height="2" /><rect x="3.5" y="8" width="2" height="4" /><rect x="7" y="6" width="2" height="6" /><rect x="10.5" y="3" width="2" height="9" /><rect x="14" y="0" width="2" height="12" /></svg>
        </TrayIcon>
        <TrayIcon $w={20}>
          <svg width="15" height="14" viewBox="0 0 15 14"><path d="M0 4.5 H3 L8 1 V13 L3 9.5 H0 Z" fill="#fff" /><path d="M10 4 C11.5 6 11.5 8 10 10 M12 2.5 C14.5 5.5 14.5 8.5 12 11.5" fill="none" stroke="#fff" /></svg>
        </TrayIcon>
        <TrayLang>සිං</TrayLang>
        <Clock>8:04 PM<br />6/8/2015</Clock>
      </Tray>
    </Taskbar>

    <ImeBar>
      <svg width="94" height="22" viewBox="0 0 94 22">
        <path d="M4 2 H14 V14 H4 Z" fill="#2b8a3e" />
        <path d="M14 2 H24 V10 H14 Z" fill="#d33" />
        <path d="M9 6 L14 2 L19 10 H9 Z" fill="#e9e9e9" />
        <circle cx="34" cy="9" r="2" fill="none" stroke="#7aa7e0" />
        <circle cx="41" cy="13" r="1.5" fill="none" stroke="#7aa7e0" />
        <rect x="47" y="5" width="18" height="12" rx="1" fill="#2a6fd6" />
        <path d="M49 8 H63 M49 11 H63 M51 14 H61" stroke="#fff" strokeWidth="1.4" strokeDasharray="2 1" />
        <circle cx="77" cy="11" r="6" fill="none" stroke="#1b63c6" strokeWidth="3.4" />
        <circle cx="77" cy="11" r="8" fill="none" stroke="#1b63c6" strokeWidth="1.8" strokeDasharray="3 3.2" />
        <path d="M93 2 L88 11 L93 20" fill="#f4f4f4" stroke="#bbb" />
      </svg>
    </ImeBar>
    <Arrow />
    <Tooltip>Outline Color</Tooltip>
  </Shell>
);

export default App;
